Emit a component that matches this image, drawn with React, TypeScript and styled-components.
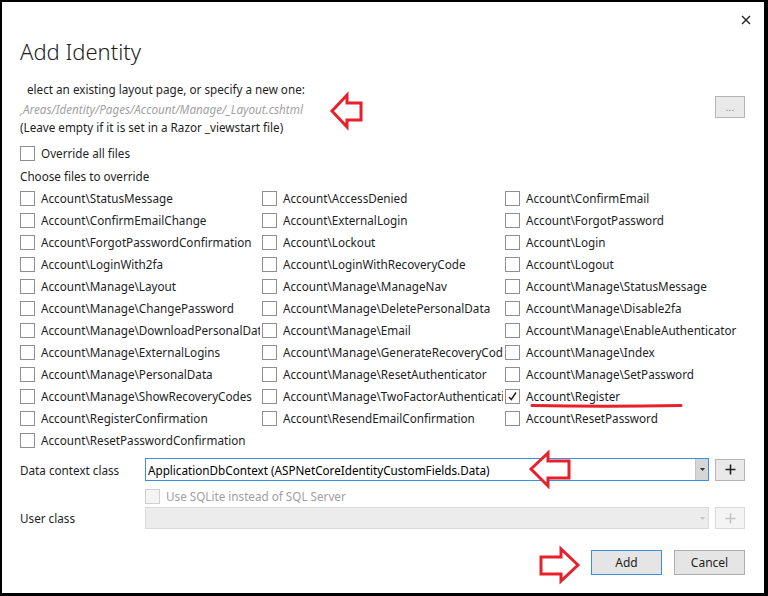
import styled, { createGlobalStyle } from 'styled-components';

const Global = createGlobalStyle`
	html, body {
		margin: 0;
		padding: 0;
		background: #000;
	}
	#root {
		width: 768px;
		height: 596px;
	}
`;

const Dialog = styled.div`
	position: relative;
	box-sizing: border-box;
	width: 762px;
	height: 591px;
	margin: 2px 4px 3px 2px;
	padding: 0 19px 0 18px;
	background: #fff;
	color: #1e1e1e;
	font-family: 'Noto Sans', 'Open Sans', sans-serif;
	font-size: 11.7px;
	display: flex;
	flex-direction: column;
`;

const TopBar = styled.div`
	height: 34px;
	display: flex;
	justify-content: flex-end;
	align-items: flex-start;
	padding-top: 12px;
	box-sizing: border-box;
	margin-right: -7px;
`;

const CloseButton = styled.button`
	width: 12px;
	height: 12px;
	padding: 0;
	border: 0;
	background: transparent;
	display: flex;
	align-items: center;
	justify-content: center;
`;

const Title = styled.h1`
	margin: 0;
	font-size: 22px;
	font-weight: 300;
	line-height: 30px;
	color: #1e1e1e;
`;

const Text = styled.div<{ $indent?: number; $muted?: boolean; $italic?: boolean }>`
	line-height: 18px;
	white-space: nowrap;
	padding-left: ${(p) => p.$indent ?? 0}px;
	color: ${(p) => (p.$muted ? '#a2a2a2' : '#1e1e1e')};
	font-style: ${(p) => (p.$italic ? 'italic' : 'normal')};
`;

const Prompt = styled(Text)`
	line-height: 16px;
	margin-top: 15px;
`;

const PathRow = styled.div`
	display: flex;
	align-items: center;
	height: 22px;
	margin-top: -1px;
	justify-content: space-between;
`;

const PathText = styled(Text)`
	padding-top: 3px;
`;

const SmallButton = styled.button<{ $disabled?: boolean }>`
	box-sizing: border-box;
	width: 30px;
	height: 22px;
	padding: 0;
	border: 1px solid ${(p) => (p.$disabled ? '#d9d9d9' : '#b5b5b5')};
	background: ${(p) => (p.$disabled ? '#f4f4f4' : '#e9e9e9')};
	color: ${(p) => (p.$disabled ? '#b8b8b8' : '#1e1e1e')};
	font-family: inherit;
	display: flex;
	align-items: center;
	justify-content: center;
`;

const Dots = styled.span`
	font-size: 9px;
	color: #777;
	letter-spacing: 0.5px;
	margin-top: 1px;
`;

const CheckRow = styled.label<{ $disabled?: boolean; $top?: number }>`
	display: flex;
	align-items: center;
	gap: 6px;
	height: 22px;
	margin-top: ${(p) => p.$top ?? 0}px;
	color: ${(p) => (p.$disabled ? '#a0a0a0' : '#1e1e1e')};
	white-space: nowrap;
`;

const Box = styled.span<{ $disabled?: boolean }>`
	box-sizing: border-box;
	flex: none;
	width: 15px;
	height: 15px;
	border: 1px solid ${(p) => (p.$disabled ? '#cfcfcf' : '#8f8f8f')};
	background: ${(p) => (p.$disabled ? '#f4f4f4' : '#fff')};
	display: flex;
	align-items: center;
	justify-content: center;
`;

const FileGrid = styled.div`
	display: grid;
	grid-template-columns: 242px 243px 1fr;
	grid-auto-rows: 22px;
	margin-top: 2px;
`;

const Cell = styled.label`
	display: flex;
	align-items: center;
	gap: 6px;
	min-width: 0;
	padding-right: 2px;
`;

const CellText = styled.span`
	flex: 1;
	min-width: 0;
	overflow: hidden;
	white-space: nowrap;
`;

const FieldRow = styled.div<{ $top?: number; $height: number }>`
	display: flex;
	align-items: center;
	gap: 6px;
	height: ${(p) => p.$height}px;
	margin-top: ${(p) => p.$top ?? 0}px;
`;

const FieldLabel = styled.div`
	width: 119px;
	flex: none;
`;

const Combo = styled.div<{ $disabled?: boolean }>`
	box-sizing: border-box;
	width: 565px;
	height: 100%;
	display: flex;
	align-items: stretch;
	border: 1px solid ${(p) => (p.$disabled ? '#d9d9d9' : '#3c8fe0')};
	background: ${(p) => (p.$disabled ? '#ececec' : '#fff')};
`;

const ComboValue = styled.div`
	flex: 1;
	display: flex;
	align-items: center;
	padding-left: 2px;
	white-space: nowrap;
	overflow: hidden;
	color: #000;
`;

const ComboArrow = styled.div<{ $disabled?: boolean }>`
	width: 12px;
	display: flex;
	align-items: center;
	justify-content: center;
	background: ${(p) => (p.$disabled ? 'transparent' : '#d6d6d6')};
	border-left: 1px solid ${(p) => (p.$disabled ? 'transparent' : '#c4c4c4')};
`;

const Indented = styled.div`
	padding-left: 125px;
`;

const Footer = styled.div`
	display: flex;
	justify-content: flex-end;
	gap: 12px;
	margin-top: 21px;
`;

const DialogButton = styled.button<{ $primary?: boolean }>`
	box-sizing: border-box;
	width: 71px;
	height: 25px;
	border: 1px solid ${(p) => (p.$primary ? '#3c8fe0' : '#adadad')};
	background: #e5e5e5;
	color: #1e1e1e;
	font-family: inherit;
	font-size: 12px;
	padding: 0;
`;

const Overlay = styled.svg`
	position: absolute;
	left: -2px;
	top: -2px;
	width: 768px;
	height: 596px;
	pointer-events: none;
`;

function Check({ checked }: { checked?: boolean }) {
	if (!checked) return null;
	return (
		<svg width='11' height='11' viewBox='0 0 11 11'>
			<path d='M2 6 L4.3 8.5 L9 1.5' fill='none' stroke='#222' strokeWidth='1.4' />
		</svg>
	);
}

const files = [
	'Account\\StatusMessage',
	'Account\\AccessDenied',
	'Account\\ConfirmEmail',
	'Account\\ConfirmEmailChange',
	'Account\\ExternalLogin',
	'Account\\ForgotPassword',
	'Account\\ForgotPasswordConfirmation',
	'Account\\Lockout',
	'Account\\Login',
	'Account\\LoginWith2fa',
	'Account\\LoginWithRecoveryCode',
	'Account\\Logout',
	'Account\\Manage\\Layout',
	'Account\\Manage\\ManageNav',
	'Account\\Manage\\StatusMessage',
	'Account\\Manage\\ChangePassword',
	'Account\\Manage\\DeletePersonalData',
	'Account\\Manage\\Disable2fa',
	'Account\\Manage\\DownloadPersonalData',
	'Account\\Manage\\Email',
	'Account\\Manage\\EnableAuthenticator',
	'Account\\Manage\\ExternalLogins',
	'Account\\Manage\\GenerateRecoveryCodes',
	'Account\\Manage\\Index',
	'Account\\Manage\\PersonalData',
	'Account\\Manage\\ResetAuthenticator',
	'Account\\Manage\\SetPassword',
	'Account\\Manage\\ShowRecoveryCodes',
	'Account\\Manage\\TwoFactorAuthentication',
	'Account\\Register',
	'Account\\RegisterConfirmation',
	'Account\\ResendEmailConfirmation',
	'Account\\ResetPassword',
	'Account\\ResetPasswordConfirmation',
];

const checked = new Set(['Account\\Register']);

function Plus({ color }: { color: string }) {
	return (
		<svg width='11' height='11' viewBox='0 0 11 11'>
			<path d='M5.5 0.5 V10.5 M0.5 5.5 H10.5' stroke={color} strokeWidth='1.6' />
		</svg>
	);
}

function DownArrow({ color }: { color: string }) {
	return (
		<svg width='5' height='3' viewBox='0 0 5 3'>
			<path d='M0 0 H5 L2.5 3 Z' fill={color} />
		</svg>
	);
}

export default function App() {
	return (
		<>
			<Global />
			<Dialog>
				<TopBar>
					<CloseButton>
						<svg width='10' height='10' viewBox='0 0 10 10'>
							<path d='M1 1 L9 9 M9 1 L1 9' stroke='#222' strokeWidth='1.4' />
						</svg>
					</CloseButton>
				</TopBar>
				<Title>Add Identity</Title>

				<Prompt $indent={7}>elect an existing layout page, or specify a new one:</Prompt>
				<PathRow>
					<PathText $muted $italic>
						,Areas/Identity/Pages/Account/Manage/_Layout.cshtml
					</PathText>
					<SmallButton>
						<Dots>...</Dots>
					</SmallButton>
				</PathRow>
				<Text>(Leave empty if it is set in a Razor _viewstart file)</Text>

				<CheckRow $top={6}>
					<Box />
					Override all files
				</CheckRow>
				<Text style={{ marginTop: 3 }}>Choose files to override</Text>

				<FileGrid>
					{files.map((f) => (
						<Cell key={f}>
							<Box>
								<Check checked={checked.has(f)} />
							</Box>
							<CellText>{f}</CellText>
						</Cell>
					))}
				</FileGrid>

				<FieldRow $top={7} $height={23}>
					<FieldLabel>Data context class</FieldLabel>
					<Combo>
						<ComboValue>ApplicationDbContext (ASPNetCoreIdentityCustomFields.Data)</ComboValue>
						<ComboArrow>
							<DownArrow color='#333' />
						</ComboArrow>
					</Combo>
					<SmallButton>
						<Plus color='#222' />
					</SmallButton>
				</FieldRow>

				<Indented>
					<CheckRow $disabled $top={4}>
						<Box $disabled />
						Use SQLite instead of SQL Server
					</CheckRow>
				</Indented>

				<FieldRow $height={22}>
					<FieldLabel>User class</FieldLabel>
					<Combo $disabled>
						<ComboValue />
						<ComboArrow $disabled>
							<DownArrow color='#c4c4c4' />
						</ComboArrow>
					</Combo>
					<SmallButton $disabled>
						<Plus color='#c4c4c4' />
					</SmallButton>
				</FieldRow>

				<Footer>
					<DialogButton $primary>Add</DialogButton>
					<DialogButton>Cancel</DialogButton>
				</Footer>

				{/* annotation arrows drawn over the dialog */}
				<Overlay viewBox='0 0 768 596'>
					<g fill='#fff' stroke='#e8202a' strokeWidth='3' strokeLinejoin='miter'>
						<polygon points='332,111 347,95 347,103 361,103 361,120 347,120 347,127' />
						<polygon points='531,469 548,453 548,461 569,461 569,478 548,478 548,486' />
						<polygon points='578,565 561,549 561,557 541,557 541,574 561,574 561,581' />
					</g>
					<path d='M532 405.5 Q606 407 681 405.5' stroke='#e8202a' strokeWidth='3' strokeLinecap='round' fill='none' />
				</Overlay>
			</Dialog>
		</>
	);
}
